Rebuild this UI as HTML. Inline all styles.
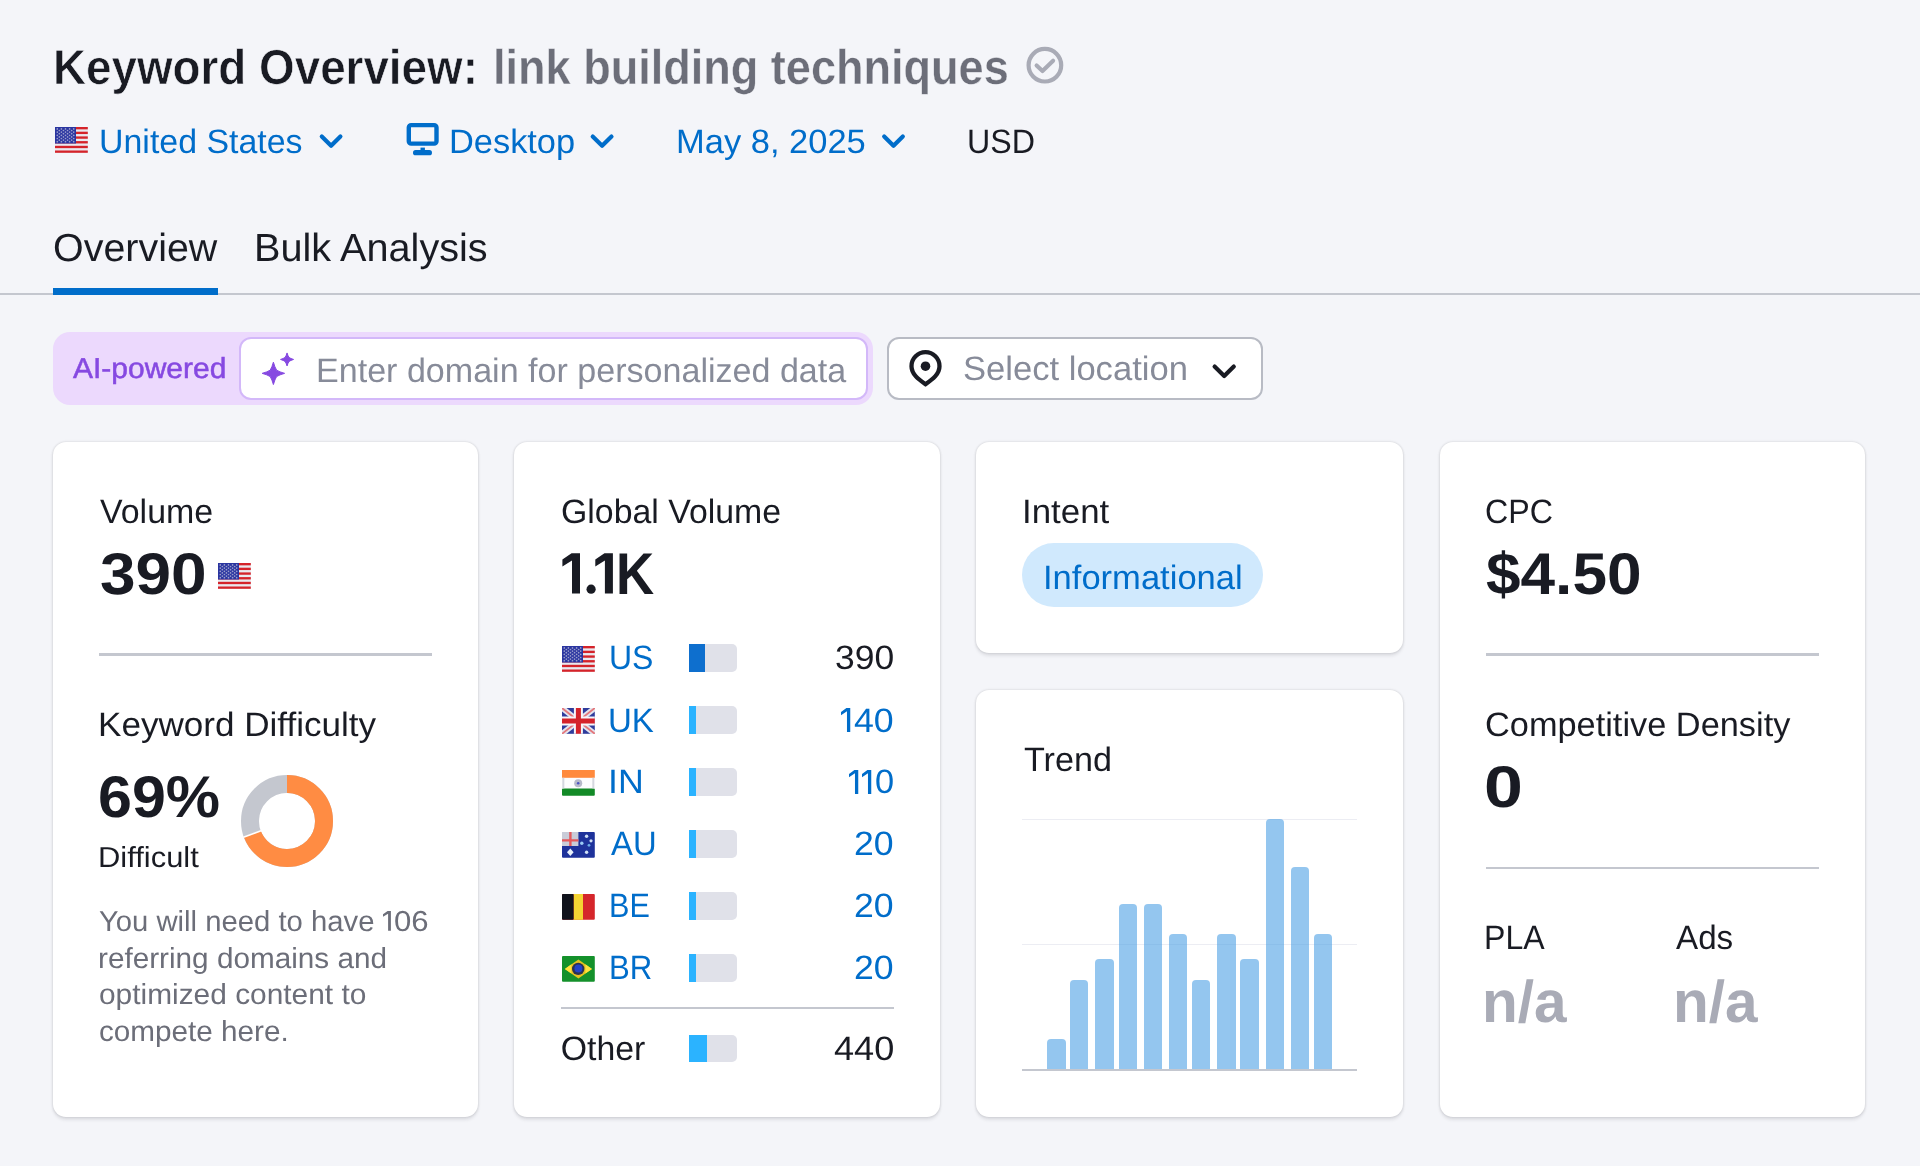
<!DOCTYPE html>
<html lang="en">
<head>
<meta charset="utf-8">
<title>Keyword Overview: link building techniques</title>
<style>
html,body{margin:0;padding:0;}
body{width:1920px;height:1166px;background:#f4f5f9;position:relative;overflow:hidden;font-family:"Liberation Sans",sans-serif;}
.t{position:absolute;white-space:nowrap;line-height:1;text-rendering:geometricPrecision;font-family:"Liberation Sans",sans-serif;}
.abs{position:absolute;}
.layer{position:absolute;left:0;top:0;width:1920px;height:1166px;will-change:transform;}
.card{position:absolute;background:#fff;border-radius:13px;box-shadow:0 0 2.5px rgba(25,27,35,.18),0 2.3px 3.5px rgba(25,27,35,.09);}
.hr{position:absolute;height:2.6px;background:#c4c7cf;}
.bar{position:absolute;width:48.3px;height:27.5px;background:#e0e1e9;border-radius:0 5px 5px 0;overflow:hidden;}
.bar i{position:absolute;left:0;top:0;bottom:0;background:#2bb3ff;display:block;}
.tb{position:absolute;background:rgba(76,160,228,.6);border-radius:4px 4px 0 0;}
svg{position:absolute;overflow:visible;}
</style>
</head>
<body>
<!-- header: check icon -->
<svg style="left:1024px;top:44px" width="42" height="42" viewBox="1024 44 42 42">
  <circle cx="1044.9" cy="65.2" r="16.3" fill="none" stroke="#a9abb6" stroke-width="4.2"/>
  <path d="M1036.6 65.4 L1042.5 71.0 L1053.1 60.7" fill="none" stroke="#a9abb6" stroke-width="4.1" stroke-linecap="round" stroke-linejoin="round"/>
</svg>

<!-- US flag (header) -->
<svg style="left:54.8px;top:127.1px" width="32.8" height="25.8" viewBox="0 0 32.8 25.8"><use href="#f-us"/></svg>

<!-- chevrons row 2 -->
<svg style="left:0;top:0" width="1920" height="1166" viewBox="0 0 1920 1166">
  <defs>
    <g id="f-us">
      <rect width="32.8" height="25.8" fill="#e9e9ef"/>
      <g fill="#d5232a">
        <rect y="0" width="32.8" height="2.35"/><rect y="4.7" width="32.8" height="2.35"/><rect y="9.4" width="32.8" height="2.35"/>
        <rect y="14.1" width="32.8" height="2.35"/><rect y="18.8" width="32.8" height="2.35"/><rect y="23.5" width="32.8" height="2.3"/>
      </g>
      <rect width="21" height="16.5" fill="#2a35a0"/>
      <g fill="#9a9dcb"><circle cx="2.30" cy="1.90" r="0.85"/><circle cx="6.40" cy="1.90" r="0.85"/><circle cx="10.50" cy="1.90" r="0.85"/><circle cx="14.60" cy="1.90" r="0.85"/><circle cx="18.70" cy="1.90" r="0.85"/><circle cx="2.30" cy="5.10" r="0.85"/><circle cx="6.40" cy="5.10" r="0.85"/><circle cx="10.50" cy="5.10" r="0.85"/><circle cx="14.60" cy="5.10" r="0.85"/><circle cx="18.70" cy="5.10" r="0.85"/><circle cx="2.30" cy="8.30" r="0.85"/><circle cx="6.40" cy="8.30" r="0.85"/><circle cx="10.50" cy="8.30" r="0.85"/><circle cx="14.60" cy="8.30" r="0.85"/><circle cx="18.70" cy="8.30" r="0.85"/><circle cx="2.30" cy="11.50" r="0.85"/><circle cx="6.40" cy="11.50" r="0.85"/><circle cx="10.50" cy="11.50" r="0.85"/><circle cx="14.60" cy="11.50" r="0.85"/><circle cx="18.70" cy="11.50" r="0.85"/><circle cx="2.30" cy="14.70" r="0.85"/><circle cx="6.40" cy="14.70" r="0.85"/><circle cx="10.50" cy="14.70" r="0.85"/><circle cx="14.60" cy="14.70" r="0.85"/><circle cx="18.70" cy="14.70" r="0.85"/><circle cx="4.35" cy="3.50" r="0.85"/><circle cx="8.45" cy="3.50" r="0.85"/><circle cx="12.55" cy="3.50" r="0.85"/><circle cx="16.65" cy="3.50" r="0.85"/><circle cx="4.35" cy="6.70" r="0.85"/><circle cx="8.45" cy="6.70" r="0.85"/><circle cx="12.55" cy="6.70" r="0.85"/><circle cx="16.65" cy="6.70" r="0.85"/><circle cx="4.35" cy="9.90" r="0.85"/><circle cx="8.45" cy="9.90" r="0.85"/><circle cx="12.55" cy="9.90" r="0.85"/><circle cx="16.65" cy="9.90" r="0.85"/><circle cx="4.35" cy="13.10" r="0.85"/><circle cx="8.45" cy="13.10" r="0.85"/><circle cx="12.55" cy="13.10" r="0.85"/><circle cx="16.65" cy="13.10" r="0.85"/></g>
    </g>
  </defs>
  <g fill="none" stroke="#006dca" stroke-width="4.2" stroke-linecap="round" stroke-linejoin="round">
    <path d="M321.8 136.6 L331.1 145.8 L340.4 136.6"/>
    <path d="M592.7 136.6 L602.1 145.8 L611.5 136.6"/>
    <path d="M884.2 136.6 L893.5 145.8 L902.8 136.6"/>
  </g>
  <!-- desktop icon -->
  <rect x="408.8" y="125.1" width="27.7" height="18.5" rx="2.4" fill="none" stroke="#006dca" stroke-width="4.4"/>
  <rect x="420.5" y="147.6" width="4.4" height="4" fill="#006dca"/>
  <rect x="413" y="150.1" width="19" height="5.2" rx="2.6" fill="#006dca"/>
</svg>

<!-- tabs lines -->
<div class="abs" style="left:0;top:292.6px;width:1920px;height:2.4px;background:#c4c7cf"></div>
<div class="abs" style="left:53px;top:288.2px;width:165.2px;height:6.8px;background:#006dca"></div>

<!-- AI-powered input -->
<div class="abs" style="left:53px;top:331.8px;width:819.5px;height:73.6px;border-radius:17px;background:#ecd9fd"></div>
<div class="abs" style="left:239px;top:337px;width:625px;height:59px;border:2px solid #d3b8f9;border-radius:12px;background:#fff"></div>
<svg style="left:255px;top:348px" width="46" height="42" viewBox="255 348 46 42">
  <g fill="#8649e1" stroke="#8649e1" stroke-width="1" stroke-linejoin="round">
  <path transform="translate(273.4 373.35)" d="M0 -11.2 Q1.38 -6.19 3.20 -3.20 Q6.19 -1.38 11.20 0.00 Q6.19 1.38 3.20 3.20 Q1.38 6.19 0.00 11.20 Q-1.38 6.19 -3.20 3.20 Q-6.19 1.38 -11.20 0.00 Q-6.19 -1.38 -3.20 -3.20 Q-1.38 -6.19 0.00 -11.20 Z"/>
  <path transform="translate(287.05 359.45)" d="M0 -6.5 Q0.86 -3.65 2.00 -2.00 Q3.65 -0.86 6.50 0.00 Q3.65 0.86 2.00 2.00 Q0.86 3.65 0.00 6.50 Q-0.86 3.65 -2.00 2.00 Q-3.65 0.86 -6.50 0.00 Q-3.65 -0.86 -2.00 -2.00 Q-0.86 -3.65 0.00 -6.50 Z"/>
  </g>
</svg>

<!-- select location -->
<div class="abs" style="left:886.8px;top:336.8px;width:372px;height:59.7px;border:2px solid #b8bbc4;border-radius:12px;background:#fff"></div>
<svg style="left:905px;top:346px" width="42" height="46" viewBox="-21 -20 42 46">
  <g transform="translate(-0.5 0.2)">
  <path d="M0 18 C-7 13 -14 8 -14 0 A14 14 0 1 1 14 0 C14 8 7 13 0 18 Z" fill="none" stroke="#191b23" stroke-width="4.3" stroke-linejoin="miter"/>
  <circle cx="0" cy="0" r="4.8" fill="#191b23"/>
  </g>
</svg>

<svg style="left:1208px;top:360px" width="32" height="22" viewBox="1208 360 32 22">
  <path d="M1214.6 366.6 L1224.2 376 L1233.8 366.6" fill="none" stroke="#191b23" stroke-width="4.2" stroke-linecap="round" stroke-linejoin="round"/>
</svg>

<!-- cards -->
<div class="card" style="left:53.2px;top:442px;width:424.8px;height:674.9px"></div>
<div class="card" style="left:514.4px;top:442px;width:425.2px;height:674.9px"></div>
<div class="card" style="left:976px;top:442px;width:427.2px;height:211.3px"></div>
<div class="card" style="left:976px;top:690px;width:427.2px;height:426.9px"></div>
<div class="card" style="left:1440px;top:442px;width:425px;height:674.9px"></div>

<!-- card 1 -->
<svg style="left:217.8px;top:563.3px" width="32.8" height="25.8" viewBox="0 0 32.8 25.8"><use href="#f-us"/></svg>
<div class="hr" style="left:98.8px;top:653px;width:333.2px"></div>
<svg style="left:240.8px;top:775px" width="92" height="92" viewBox="-46 -46 92 92">
  <circle r="37" fill="none" stroke="#c4c7cf" stroke-width="18"/>
  <circle r="37" fill="none" stroke="#ff8c43" stroke-width="18" stroke-dasharray="161.18 232.48" transform="rotate(-90)"/>
  <path d="M0 0 L-43.58 16.21" stroke="#fff" stroke-width="1.6"/>
  <circle r="27.4" fill="#fff"/>
</svg>

<!-- card 2 -->
<svg style="left:560px;top:550px" width="60" height="48" viewBox="560 550 60 48" aria-label="1.1">
  <g fill="#191b23">
    <path id="one" d="M580 553.25 H571.56 L562.4 559.5 V566.6 L572 560.6 V593.4 H580 Z"/>
    <path d="M580 553.25 H571.56 L562.4 559.5 V566.6 L572 560.6 V593.4 H580 Z" transform="translate(32.9 0)"/>
    <circle cx="591.1" cy="589.2" r="4.6"/>
  </g>
</svg>
<svg style="left:562.3px;top:646.2px" width="32.8" height="25.8" viewBox="0 0 32.8 25.8"><use href="#f-us"/></svg>
<!-- UK -->
<svg style="left:562.3px;top:707.9px;overflow:hidden" width="32.8" height="25.8" viewBox="0 0 32.8 25.8">
  <rect width="32.8" height="25.8" fill="#2f3c9c"/>
  <path d="M0 0 L32.8 25.8 M32.8 0 L0 25.8" stroke="#e3e5ee" stroke-width="5.6"/>
  <path d="M0 0 L32.8 25.8 M32.8 0 L0 25.8" stroke="#e4777b" stroke-width="1.8"/>
  <path d="M16.4 0 V25.8 M0 12.9 H32.8" stroke="#f6f6f9" stroke-width="9"/>
  <path d="M16.4 0 V25.8 M0 12.9 H32.8" stroke="#d5232a" stroke-width="5"/>
</svg>
<!-- IN -->
<svg style="left:562.3px;top:770px" width="32.8" height="25.8" viewBox="0 0 32.8 25.8">
  <rect width="32.8" height="25.8" fill="#fdfdfe"/>
  <rect width="32.8" height="7.8" fill="#ff8a3d"/>
  <rect y="18.4" width="32.8" height="7.4" rx="1" fill="#138a27"/>
  <rect x="0.3" y="7.8" width="2" height="10.6" fill="#d5d7df"/><rect x="30.3" y="7.8" width="2" height="10.6" fill="#d5d7df"/>
  <circle cx="16.2" cy="13.2" r="4" fill="#9fa3b8" opacity=".75"/>
  <circle cx="16.2" cy="13.2" r="1.3" fill="#4a52c4"/>
</svg>
<!-- AU -->
<svg style="left:562.3px;top:832px" width="32.8" height="25.8" viewBox="0 0 32.8 25.8">
  <rect width="32.8" height="25.8" rx="1" fill="#1e329b"/>
  <rect width="16.4" height="14" fill="#c9ccd8"/>
  <path d="M8.4 0 V14 M0 8.4 H16.4" stroke="#e4595c" stroke-width="2.4"/>
  <path d="M8.3 16.5 L11.6 20.2 L8.3 23.9 L5 20.2 Z" fill="#e9f1fb"/>
  <circle cx="24.6" cy="4.2" r="1.7" fill="#cfe0f5"/><circle cx="29" cy="8.8" r="1.6" fill="#cfe0f5"/>
  <circle cx="19.8" cy="11.2" r="1.7" fill="#9ccbf5"/><circle cx="27" cy="13.3" r="1.4" fill="#6faee8"/>
  <circle cx="24.6" cy="20.2" r="1.7" fill="#cfe0f5"/>
</svg>
<!-- BE -->
<svg style="left:562.3px;top:894px" width="32.8" height="25.8" viewBox="0 0 32.8 25.8">
  <rect width="32.8" height="25.8" rx="1" fill="#d5262b"/>
  <rect x="11.6" width="9.4" height="25.8" fill="#f4d433"/>
  <rect width="11.6" height="25.8" rx="1" fill="#10131c"/>
</svg>
<!-- BR -->
<svg style="left:562.3px;top:956px" width="32.8" height="25.8" viewBox="0 0 32.8 25.8">
  <rect width="32.8" height="25.8" rx="1" fill="#14912b"/>
  <path d="M2.8 12.9 L16.4 3.4 L30 12.9 L16.4 22.4 Z" fill="#e3c21f"/>
  <path d="M2.8 12.9 L9.4 8.3 V17.5 Z M30 12.9 L23.4 8.3 V17.5 Z" fill="#ffe23d"/>
  <circle cx="16.2" cy="12.9" r="6.2" fill="#2a3352"/>
  <circle cx="16.4" cy="12.6" r="4" fill="#2343c8"/>
</svg>

<div class="bar" style="left:688.8px;top:644.1px"><i style="width:16.3px;background:#0e6fce"></i></div>
<div class="bar" style="left:688.8px;top:706px"><i style="width:7.1px"></i></div>
<div class="bar" style="left:688.8px;top:768px"><i style="width:7.1px"></i></div>
<div class="bar" style="left:688.8px;top:830px"><i style="width:7.1px"></i></div>
<div class="bar" style="left:688.8px;top:892px"><i style="width:7.1px"></i></div>
<div class="bar" style="left:688.8px;top:954px"><i style="width:7.1px"></i></div>
<div class="hr" style="left:560.5px;top:1006.8px;width:333px"></div>
<div class="bar" style="left:688.8px;top:1034.5px"><i style="width:18.3px"></i></div>

<!-- card 3 -->
<div class="abs" style="left:1021.8px;top:543.2px;width:241.5px;height:64px;border-radius:32px;background:#d0e9fd"></div>
<div class="abs" style="left:1022px;top:818.5px;width:335.4px;height:1.6px;background:#ecedf3"></div>
<div class="abs" style="left:1022px;top:943.6px;width:335.4px;height:1.6px;background:#ecedf3"></div>
<div class="tb" style="left:1047.3px;top:1039.4px;width:18.3px;height:30px"></div>
<div class="tb" style="left:1070.2px;top:979.6px;width:18.3px;height:90px"></div>
<div class="tb" style="left:1095.3px;top:958.7px;width:18.4px;height:111px"></div>
<div class="tb" style="left:1118.5px;top:903.8px;width:18.4px;height:166px"></div>
<div class="tb" style="left:1143.9px;top:903.8px;width:18.2px;height:166px"></div>
<div class="tb" style="left:1169px;top:933.6px;width:18.4px;height:136px"></div>
<div class="tb" style="left:1191.9px;top:979.6px;width:18.4px;height:90px"></div>
<div class="tb" style="left:1217.3px;top:933.6px;width:18.4px;height:136px"></div>
<div class="tb" style="left:1240.2px;top:958.7px;width:18.4px;height:111px"></div>
<div class="tb" style="left:1265.5px;top:818.7px;width:18.4px;height:251px"></div>
<div class="tb" style="left:1290.9px;top:867.2px;width:18.2px;height:203px"></div>
<div class="tb" style="left:1313.8px;top:933.6px;width:18.4px;height:136px"></div>
<div class="abs" style="left:1022px;top:1068.7px;width:335.4px;height:2.5px;background:#c4c7cf"></div>

<!-- card 4 -->
<div class="hr" style="left:1485.9px;top:653px;width:333px"></div>
<div class="hr" style="left:1485.9px;top:866.6px;width:333px"></div>

<!-- texts -->
<div class="layer">
<span class="t" style="left:52.76px;top:43.75px;font-size:49px;font-weight:700;color:#191b23;letter-spacing:0.000px;transform:scaleX(0.9343);transform-origin:0 0;-webkit-text-stroke:0.6px #f4f5f9;">Keyword Overview:</span>
<span class="t" style="left:493.48px;top:43.75px;font-size:49px;font-weight:700;color:#6c6e79;letter-spacing:0.000px;transform:scaleX(0.9196);transform-origin:0 0;-webkit-text-stroke:0.35px #f4f5f9;">link building techniques</span>
<span class="t" style="left:98.59px;top:126.00px;font-size:33.8px;font-weight:400;color:#006dca;letter-spacing:0.000px;transform:scaleX(1.0033);transform-origin:0 0;">United States</span>
<span class="t" style="left:449.20px;top:126.00px;font-size:33.8px;font-weight:400;color:#006dca;letter-spacing:0.000px;transform:scaleX(1.0171);transform-origin:0 0;">Desktop</span>
<span class="t" style="left:676.19px;top:126.00px;font-size:33.8px;font-weight:400;color:#006dca;letter-spacing:0.000px;transform:scaleX(1.0201);transform-origin:0 0;">May 8, 2025</span>
<span class="t" style="left:966.62px;top:125.50px;font-size:33.8px;font-weight:400;color:#191b23;letter-spacing:0.000px;transform:scaleX(0.9517);transform-origin:0 0;">USD</span>
<span class="t" style="left:52.74px;top:228.80px;font-size:39.2px;font-weight:400;color:#191b23;letter-spacing:0.000px;transform:scaleX(1.0062);transform-origin:0 0;">Overview</span>
<span class="t" style="left:253.71px;top:228.80px;font-size:39.2px;font-weight:400;color:#191b23;letter-spacing:0.000px;transform:scaleX(1.0122);transform-origin:0 0;">Bulk Analysis</span>
<span class="t" style="left:72.80px;top:354.50px;font-size:28.9px;font-weight:400;color:#8649e1;letter-spacing:0.000px;transform:scaleX(1.0377);transform-origin:0 0;-webkit-text-stroke:0.5px #8649e1;">AI-powered</span>
<span class="t" style="left:315.63px;top:354.80px;font-size:33.8px;font-weight:400;color:#878b99;letter-spacing:0.000px;transform:scaleX(1.0079);transform-origin:0 0;">Enter domain for personalized data</span>
<span class="t" style="left:963.47px;top:353.00px;font-size:33.8px;font-weight:400;color:#878b99;letter-spacing:0.000px;transform:scaleX(1.0231);transform-origin:0 0;">Select location</span>
<span class="t" style="left:99.65px;top:496.00px;font-size:33.8px;font-weight:400;color:#191b23;letter-spacing:0.000px;transform:scaleX(1.0036);transform-origin:0 0;">Volume</span>
<span class="t" style="left:99.64px;top:545.60px;font-size:58.9px;font-weight:700;color:#191b23;letter-spacing:0.000px;transform:scaleX(1.0857);transform-origin:0 0;">390</span>
<span class="t" style="left:97.55px;top:708.80px;font-size:33.8px;font-weight:400;color:#191b23;letter-spacing:0.000px;transform:scaleX(1.0377);transform-origin:0 0;">Keyword Difficulty</span>
<span class="t" style="left:98.07px;top:768.60px;font-size:58.9px;font-weight:700;color:#191b23;letter-spacing:0.000px;transform:scaleX(1.0360);transform-origin:0 0;">69%</span>
<span class="t" style="left:97.99px;top:843.90px;font-size:28.9px;font-weight:400;color:#191b23;letter-spacing:0.000px;transform:scaleX(1.0703);transform-origin:0 0;">Difficult</span>
<span class="t" style="left:99.14px;top:908.20px;font-size:28.9px;font-weight:400;color:#6c6e79;letter-spacing:0.000px;transform:scaleX(1.0126);transform-origin:0 0;">You will need to have</span>
<span class="t" style="left:393.75px;top:908.20px;font-size:28.9px;font-weight:400;color:#6c6e79;letter-spacing:0.000px;transform:scaleX(1.0780);transform-origin:0 0;">06</span>
<span class="t" style="left:97.84px;top:944.90px;font-size:28.9px;font-weight:400;color:#6c6e79;letter-spacing:0.000px;transform:scaleX(1.0283);transform-origin:0 0;">referring domains and</span>
<span class="t" style="left:98.61px;top:981.30px;font-size:28.9px;font-weight:400;color:#6c6e79;letter-spacing:0.000px;transform:scaleX(1.0340);transform-origin:0 0;">optimized content to</span>
<span class="t" style="left:98.62px;top:1017.90px;font-size:28.9px;font-weight:400;color:#6c6e79;letter-spacing:0.000px;transform:scaleX(1.0274);transform-origin:0 0;">compete here.</span>
<span class="t" style="left:560.55px;top:496.00px;font-size:33.8px;font-weight:400;color:#191b23;letter-spacing:0.000px;transform:scaleX(1.0014);transform-origin:0 0;">Global Volume</span>
<span class="t" style="left:615.71px;top:545.60px;font-size:58.9px;font-weight:700;color:#191b23;letter-spacing:0.000px;transform:scaleX(0.8974);transform-origin:0 0;">K</span>
<span class="t" style="left:609.03px;top:642.40px;font-size:33.8px;font-weight:400;color:#006dca;letter-spacing:0.000px;transform:scaleX(0.9465);transform-origin:0 0;">US</span>
<span class="t" style="left:608.36px;top:704.60px;font-size:33.8px;font-weight:400;color:#006dca;letter-spacing:0.000px;transform:scaleX(0.9773);transform-origin:0 0;">UK</span>
<span class="t" style="left:608.23px;top:766.40px;font-size:33.8px;font-weight:400;color:#006dca;letter-spacing:0.000px;transform:scaleX(1.0571);transform-origin:0 0;">IN</span>
<span class="t" style="left:610.50px;top:828.30px;font-size:33.8px;font-weight:400;color:#006dca;letter-spacing:0.000px;transform:scaleX(0.9718);transform-origin:0 0;">AU</span>
<span class="t" style="left:608.91px;top:890.20px;font-size:33.8px;font-weight:400;color:#006dca;letter-spacing:0.000px;transform:scaleX(0.9049);transform-origin:0 0;">BE</span>
<span class="t" style="left:608.87px;top:952.20px;font-size:33.8px;font-weight:400;color:#006dca;letter-spacing:0.000px;transform:scaleX(0.9200);transform-origin:0 0;">BR</span>
<span class="t" style="left:834.59px;top:642.40px;font-size:33.8px;font-weight:400;color:#191b23;letter-spacing:0.000px;transform:scaleX(1.0493);transform-origin:0 0;">390</span>
<span class="t" style="left:854.11px;top:704.60px;font-size:33.8px;font-weight:400;color:#006dca;letter-spacing:0.000px;transform:scaleX(1.0563);transform-origin:0 0;">40</span>
<span class="t" style="left:874.63px;top:766.40px;font-size:33.8px;font-weight:400;color:#006dca;letter-spacing:0.000px;transform:scaleX(1.0154);transform-origin:0 0;">0</span>
<span class="t" style="left:854.15px;top:828.30px;font-size:33.8px;font-weight:400;color:#006dca;letter-spacing:0.000px;transform:scaleX(1.0551);transform-origin:0 0;">20</span>
<span class="t" style="left:854.15px;top:890.20px;font-size:33.8px;font-weight:400;color:#006dca;letter-spacing:0.000px;transform:scaleX(1.0551);transform-origin:0 0;">20</span>
<span class="t" style="left:854.15px;top:952.20px;font-size:33.8px;font-weight:400;color:#006dca;letter-spacing:0.000px;transform:scaleX(1.0551);transform-origin:0 0;">20</span>
<span class="t" style="left:560.80px;top:1033.00px;font-size:33.8px;font-weight:400;color:#191b23;letter-spacing:0.000px;transform:scaleX(1.0000);transform-origin:0 0;">Other</span>
<span class="t" style="left:833.60px;top:1033.00px;font-size:33.8px;font-weight:400;color:#191b23;letter-spacing:0.000px;transform:scaleX(1.0691);transform-origin:0 0;">440</span>
<span class="t" style="left:1021.61px;top:496.00px;font-size:33.8px;font-weight:400;color:#191b23;letter-spacing:0.000px;transform:scaleX(1.0314);transform-origin:0 0;">Intent</span>
<span class="t" style="left:1042.93px;top:561.60px;font-size:33.8px;font-weight:400;color:#006dca;letter-spacing:0.000px;transform:scaleX(1.0221);transform-origin:0 0;">Informational</span>
<span class="t" style="left:1024.04px;top:743.70px;font-size:33.8px;font-weight:400;color:#191b23;letter-spacing:0.000px;transform:scaleX(1.0107);transform-origin:0 0;">Trend</span>
<span class="t" style="left:1484.74px;top:496.00px;font-size:33.8px;font-weight:400;color:#191b23;letter-spacing:0.000px;transform:scaleX(0.9509);transform-origin:0 0;">CPC</span>
<span class="t" style="left:1486.21px;top:545.60px;font-size:58.9px;font-weight:700;color:#191b23;letter-spacing:0.000px;transform:scaleX(1.0551);transform-origin:0 0;">$4.50</span>
<span class="t" style="left:1484.62px;top:709.00px;font-size:33.8px;font-weight:400;color:#191b23;letter-spacing:0.000px;transform:scaleX(1.0161);transform-origin:0 0;">Competitive Density</span>
<span class="t" style="left:1483.73px;top:759.40px;font-size:58.9px;font-weight:700;color:#191b23;letter-spacing:0.000px;transform:scaleX(1.1857);transform-origin:0 0;">0</span>
<span class="t" style="left:1483.79px;top:922.40px;font-size:33.8px;font-weight:400;color:#191b23;letter-spacing:0.000px;transform:scaleX(0.9492);transform-origin:0 0;">PLA</span>
<span class="t" style="left:1675.90px;top:922.40px;font-size:33.8px;font-weight:400;color:#191b23;letter-spacing:0.000px;transform:scaleX(0.9825);transform-origin:0 0;">Ads</span>
<span class="t" style="left:1482.42px;top:973.60px;font-size:58.9px;font-weight:700;color:#a9abb6;letter-spacing:0.000px;transform:scaleX(0.9939);transform-origin:0 0;">n/a</span>
<span class="t" style="left:1672.72px;top:973.60px;font-size:58.9px;font-weight:700;color:#a9abb6;letter-spacing:0.000px;transform:scaleX(0.9939);transform-origin:0 0;">n/a</span>
<svg style="left:848.91px;top:770.03px" width="9.26" height="23.93" viewBox="0 0 9.26 23.93" preserveAspectRatio="none"><path fill="#006dca" d="M9.26 0H5.4L0 4.06V7.14L5.98 3.29V23.93H9.26Z"/></svg>
<svg style="left:861.84px;top:770.03px" width="9.26" height="23.93" viewBox="0 0 9.26 23.93" preserveAspectRatio="none"><path fill="#006dca" d="M9.26 0H5.4L0 4.06V7.14L5.98 3.29V23.93H9.26Z"/></svg>
<svg style="left:841.19px;top:708.03px" width="9.26" height="23.93" viewBox="0 0 9.26 23.93" preserveAspectRatio="none"><path fill="#006dca" d="M9.26 0H5.4L0 4.06V7.14L5.98 3.29V23.93H9.26Z"/></svg>
<svg style="left:383.32px;top:911.19px" width="7.90" height="19.69" viewBox="0 0 9.26 23.93" preserveAspectRatio="none"><path fill="#6c6e79" d="M9.26 0H5.4L0 4.06V7.14L5.98 3.29V23.93H9.26Z"/></svg>
</div>
</body>
</html>
